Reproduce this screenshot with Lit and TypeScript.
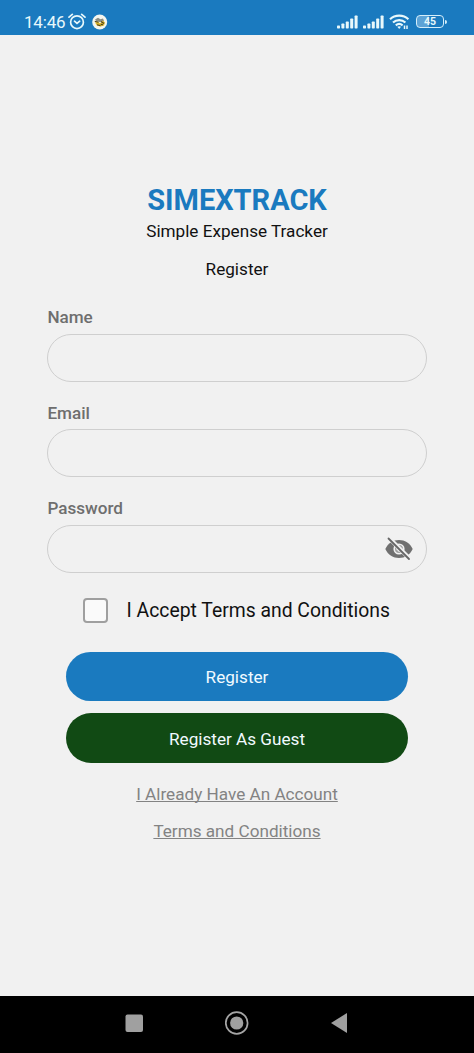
import { LitElement, html, svg, css } from 'lit';
import { customElement, property } from 'lit/decorators.js';

@customElement('status-bar')
class StatusBar extends LitElement {
  static styles = css`
    :host {
      display: block;
    }
    .bar {
      height: 35px;
      box-sizing: border-box;
      padding: 8px 27px 0 24px;
      background: #1a7abf;
      color: #e8f8fb;
      display: flex;
      justify-content: space-between;
      align-items: center;
      font-size: 17px;
    }
    .side {
      display: flex;
      align-items: center;
    }
    .time {
      letter-spacing: -0.2px;
      width: 44px;
      white-space: nowrap;
    }
    svg {
      display: block;
    }
    .app {
      margin-left: 6px;
    }
    .signal + .signal {
      margin-left: 5px;
    }
    .wifi {
      margin-left: 5px;
    }
    .battery {
      margin-left: 6px;
      display: flex;
      align-items: center;
    }
    .level {
      box-sizing: border-box;
      width: 28px;
      height: 13px;
      border: 1.5px solid #d5eefa;
      border-radius: 4px;
      background: linear-gradient(90deg, #5da3d6 45%, transparent 45%);
      font-size: 10.5px;
      font-weight: 700;
      line-height: 11px;
      text-align: center;
    }
    .tip {
      width: 2px;
      height: 4px;
      margin-left: 1px;
      border-radius: 0 2px 2px 0;
      background: #d5eefa;
    }
  `;

  signal() {
    const heights = [3, 5, 7, 10, 13];
    return html`
      <svg class="signal" width="21" height="14" viewBox="0 0 21 14" fill="currentColor">
        ${heights.map((h, i) => svg`<rect x=${i * 4.4} y=${13.5 - h} width="3" height=${h} rx="0.7" />`)}
      </svg>
    `;
  }

  render() {
    return html`
      <div class="bar">
        <div class="side">
          <span class="time">14:46</span>
          <svg width="18" height="17" viewBox="0 0 18 17" fill="none" stroke="currentColor" stroke-width="1.7" stroke-linecap="round">
            <circle cx="9" cy="9.2" r="6.4" />
            <path d="M6.5 8.2L9 10.4L11.7 8.2M1 4.2L4.3 1.4M17 4.2L13.7 1.4" />
          </svg>
          <svg class="app" width="16" height="16" viewBox="0 0 16 16">
            <circle cx="7.7" cy="8" r="7.5" fill="#f4f6ef" />
            <path d="M3 5.5L6 3.8L8.5 5.2L11 4.5L12 7L8 8L4.5 7.3Z" fill="#8b8d83" />
            <path d="M3 8.5L6 7.5L8 9.5L11 6.5L13 8.5L12 11.5L8.5 12.5L5 11.5Z" fill="#d9b52f" />
            <path d="M2.8 7.2L6.5 8.2M5 10.8L8.5 11.8M9 7.5L12 9.5M8.8 10.4L11 10.8" stroke="#4c431f" stroke-width="1.1" />
          </svg>
        </div>
        <div class="side">
          ${this.signal()} ${this.signal()}
          <svg class="wifi" width="21" height="16" viewBox="0 0 21 16" fill="none" stroke="currentColor" stroke-width="2.1">
            <path d="M1 5.2C6 0.4 14.4 0.4 19.4 5.2M4 8.5C7.4 5.3 13 5.3 16.4 8.5M6.8 11.4C8.8 9.7 11.6 9.7 13.6 11.4" />
            <path d="M8.3 12.8Q10.2 11.8 12 12.8L10.2 15Z" fill="currentColor" stroke="none" />
            <path d="M15.5 15V11.5M18 11.5V15" stroke-width="1.5" />
          </svg>
          <div class="battery">
            <div class="level">45</div>
            <div class="tip"></div>
          </div>
        </div>
      </div>
    `;
  }
}

@customElement('text-field')
class TextField extends LitElement {
  @property() label = '';
  @property() type = 'text';

  static styles = css`
    :host {
      display: block;
      height: 95.5px;
    }
    label {
      display: block;
      height: 27.5px;
      line-height: 23px;
      font-size: 17.1px;
      font-weight: 500;
      color: #6e6e6e;
    }
    .box {
      box-sizing: border-box;
      height: 48px;
      padding: 0 12.5px 0 20px;
      border: 1px solid #cfcfcf;
      border-radius: 24px;
      display: flex;
      align-items: center;
    }
    input {
      flex: 1;
      min-width: 0;
      border: 0;
      outline: 0;
      background: none;
      font: inherit;
    }
  `;

  render() {
    return html`
      <label for="input">${this.label}</label>
      <div class="box">
        <input id="input" type=${this.type} />
        ${this.type === 'password'
          ? html`
              <svg width="28" height="24" viewBox="0 0 28 24">
                <path d="M0.3 12C3 6 8.3 3 14 3S25 6 27.7 12C25 18 19.7 21 14 21S3 18 0.3 12Z" fill="#707070" />
                <circle cx="14" cy="12" r="4.8" fill="#a0a0a0" stroke="#f1f1f1" stroke-width="1.6" />
                <path d="M14 9L17 12L14 15L11 12Z" fill="#f1f1f1" />
                <path d="M4 1L25 22" stroke="#f1f1f1" stroke-width="4.2" />
                <path d="M3.5 1.5L24 22" stroke="#666" stroke-width="1.8" stroke-linecap="round" />
              </svg>
            `
          : ''}
      </div>
    `;
  }
}

@customElement('nav-bar')
class NavBar extends LitElement {
  static styles = css`
    .bar {
      height: 57px;
      box-sizing: border-box;
      padding: 0 126px 3px 125px;
      background: #000;
      display: flex;
      justify-content: space-between;
      align-items: center;
    }
    svg {
      display: block;
    }
  `;

  render() {
    return html`
      <div class="bar">
        <svg width="18" height="18"><rect x="0.5" y="0.5" width="17.5" height="17.5" rx="2" fill="#a0a0a0" /></svg>
        <svg width="24" height="24">
          <circle cx="11.7" cy="12" r="10.9" fill="none" stroke="#a5a5a5" stroke-width="1.7" />
          <circle cx="11.7" cy="12" r="6.6" fill="#a0a0a0" />
        </svg>
        <svg width="17" height="20"><path d="M0 10L16 0V20Z" fill="#a0a0a0" /></svg>
      </div>
    `;
  }
}

@customElement('app-root')
class AppRoot extends LitElement {
  static styles = css`
    :host {
      display: flex;
      flex-direction: column;
      height: 1053px;
      background: #f1f1f1;
      color: #111;
      font-family: Roboto, sans-serif;
    }
    main {
      flex: 1;
      padding: 147px 47px 0;
    }
    h1 {
      margin: 0;
      color: #1a7abf;
      font-size: 29px;
      line-height: 37px;
      font-weight: 700;
      text-align: center;
    }
    .text {
      margin: -1px 0 0;
      font-size: 17.15px;
      line-height: 26px;
      text-align: center;
    }
    .heading {
      margin: 12px 0 24px;
    }
    text-field {
      margin: 0 0.4px;
    }
    .terms {
      display: flex;
      align-items: center;
      gap: 18.5px;
      height: 26px;
      margin: 4.5px 0 28.5px 36px;
      font-size: 19.35px;
      white-space: nowrap;
    }
    .check {
      appearance: none;
      box-sizing: border-box;
      width: 25px;
      height: 25px;
      margin: 0;
      border: 2px solid #9f9f9f;
      border-radius: 4px;
      background: #fafafa;
    }
    .button {
      display: block;
      width: 342px;
      height: 49.5px;
      margin: 0 auto 12px 19px;
      padding: 2px 0 0;
      border: 0;
      border-radius: 25px;
      background: #1a7abf;
      color: #f1faff;
      font: inherit;
      font-size: 17.15px;
    }
    .guest {
      background: #114a14;
    }
    .links {
      display: flex;
      flex-direction: column;
      align-items: center;
      gap: 15.5px;
      padding-top: 8px;
    }
    a {
      color: #838383;
      font-size: 17.15px;
      line-height: 22px;
      text-decoration: underline;
      text-decoration-skip-ink: none;
    }
  `;

  render() {
    return html`
      <status-bar></status-bar>
      <main>
        <h1>SIMEXTRACK</h1>
        <p class="text">Simple Expense Tracker</p>
        <p class="text heading">Register</p>
        <text-field label="Name"></text-field>
        <text-field label="Email"></text-field>
        <text-field label="Password" type="password"></text-field>
        <label class="terms">
          <input class="check" type="checkbox" />
          <span>I Accept Terms and Conditions</span>
        </label>
        <button class="button">Register</button>
        <button class="button guest">Register As Guest</button>
        <div class="links">
          <a href="#login">I Already Have An Account</a>
          <a href="#terms">Terms and Conditions</a>
        </div>
      </main>
      <nav-bar></nav-bar>
    `;
  }
}
